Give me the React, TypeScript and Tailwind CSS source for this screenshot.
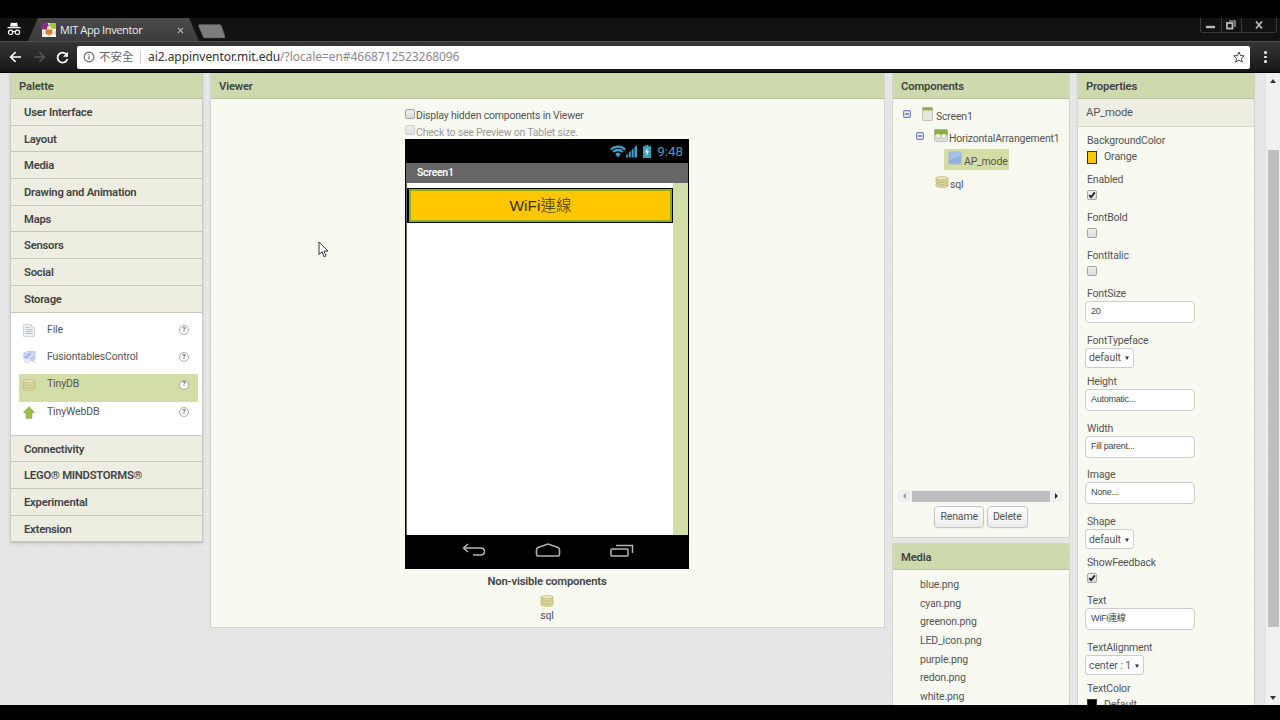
import type { ReactNode } from "react";
import clsx from "clsx";

type IconProps = { className?: string };

const topCategories = [
  "User Interface",
  "Layout",
  "Media",
  "Drawing and Animation",
  "Maps",
  "Sensors",
  "Social",
  "Storage",
];

const bottomCategories = [
  "Connectivity",
  "LEGO® MINDSTORMS®",
  "Experimental",
  "Extension",
];

const mediaFiles = [
  "blue.png",
  "cyan.png",
  "greenon.png",
  "LED_icon.png",
  "purple.png",
  "redon.png",
  "white.png",
];

/* ---------- icons ---------- */

function IncognitoIcon() {
  return (
    <svg width="14" height="14" viewBox="0 0 14 14" fill="none">
      <path d="M4 .6 5.400 1 7 .7 8.600 1 10 .6l1 3.800H3z" fill="#fff" />
      <path d="M.5 5.600h13" stroke="#fff" strokeWidth="1.3" />
      <circle cx="3.6" cy="10.3" r="2.2" stroke="#fff" strokeWidth="1.2" />
      <circle cx="10.4" cy="10.3" r="2.2" stroke="#fff" strokeWidth="1.2" />
      <path d="M5.800 9.800q1.200-.7 2.400 0" stroke="#fff" />
    </svg>
  );
}

function Favicon() {
  return (
    <svg width="14" height="14" viewBox="0 0 14 14">
      <rect width="14" height="14" fill="#fff" />
      <path d="M0 0h5.500l1.500 3-2 3.500H0z" fill="#8e2a80" />
      <path d="M7.500 0H14v6h-4L7 3z" fill="#a3c644" />
      <circle cx="7" cy="5" r="2" fill="#f3e3d2" />
      <rect x="3.5" y="6.5" width="7" height="5" rx="1" fill="#d9793a" />
      <path d="M5 11.500h4l-2 2z" fill="#e8a13a" />
      <path d="M0 8.500 2 7v5H0zM14 8.500 12 7v5h2z" fill="#f0d7b8" />
    </svg>
  );
}

function BackIcon({ className }: IconProps) {
  return (
    <svg
      width="13"
      height="12"
      viewBox="0 0 13 12"
      fill="none"
      stroke="currentColor"
      strokeWidth="1.6"
      className={className}
    >
      <path d="M12 6H1.800M6.600 1.100 1.600 6l5 4.900" />
    </svg>
  );
}

function ReloadIcon() {
  return (
    <svg width="13" height="13" viewBox="0 0 13 13" fill="none">
      <path
        d="M10.600 3.600A5 5 0 1 0 11.400 8"
        stroke="#fff"
        strokeWidth="1.7"
      />
      <path d="M12 .8v5H7z" fill="#fff" />
    </svg>
  );
}

function DatabaseIcon({ className }: IconProps) {
  return (
    <svg width="14" height="12" viewBox="0 0 14 12" className={className}>
      {[7.4, 4.4, 1.4].map((y) => (
        <g key={y} stroke="#b5ab68" strokeWidth=".7" fill="#e9e3a6">
          <path d={`M.9 ${y + 1}v1.200c0 2.400 12.200 2.400 12.200 0V${y + 1}z`} />
          <ellipse cx="7" cy={y + 0.8} rx="6.1" ry="1.5" fill="#f1ecc0" />
        </g>
      ))}
    </svg>
  );
}

function FileIcon() {
  return (
    <svg width="12" height="13" viewBox="0 0 12 13">
      <path d="M.5.5h8l3 2.800v9.200H.5z" fill="#eef1f1" stroke="#d2d8d8" />
      <path d="M8.500.5v3h3" fill="#fff" stroke="#cfd5d5" />
      <path
        d="M2.500 3.500h4M2.500 5.500h7M2.500 7.500h7M2.500 9.500h7"
        stroke="#b4c0c2"
      />
    </svg>
  );
}

function FusionIcon() {
  return (
    <svg width="13" height="14" viewBox="0 0 13 14">
      <path d="M4 1h8.500v8L10 11H3z" fill="#bccbf0" />
      <path d="M.5 2.500h7v6h-7z" fill="#a5b9ec" />
      <path d="M1 9h6v4H1z" fill="#e3e8f2" />
      <path d="M.5 6 6 2M5 9l6-6" stroke="#dfe7fb" strokeWidth="1.2" />
      <path d="M8.500 10 12 12.500" stroke="#c3cbd8" strokeWidth="1.4" />
    </svg>
  );
}

function UpArrowIcon() {
  return (
    <svg width="12" height="13" viewBox="0 0 12 13">
      <path
        d="M6 .7 11.300 6.600H8.800V12.300H3.200V6.600H.7z"
        fill="#9ac23c"
        stroke="#8aa655"
        strokeWidth=".8"
      />
    </svg>
  );
}

function HelpIcon() {
  return (
    <span className="flex size-[8px] items-center justify-center rounded-full bg-white text-[7px] font-bold leading-none text-[#666] outline outline-[#aaa]">
      ?
    </span>
  );
}

function CollapseIcon() {
  return (
    <svg width="8" height="8" viewBox="0 0 8 8" fill="none" className="mb-[4px]">
      <rect
        x=".6"
        y=".6"
        width="6.8"
        height="6.8"
        rx="1.2"
        fill="#eef0fb"
        stroke="#7780c0"
        strokeWidth="1.1"
      />
      <path d="M2 4h4" stroke="#4853a5" strokeWidth="1.2" />
    </svg>
  );
}

function ScreenIcon() {
  return (
    <svg width="11" height="14" viewBox="0 0 11 14">
      <rect x=".5" y=".5" width="10" height="13" rx=".8" fill="#e4e6e2" stroke="#bfc3b8" />
      <path d="M.5.5h10v3H.5z" fill="#95ab4c" />
    </svg>
  );
}

function ArrangementIcon() {
  return (
    <svg width="14" height="13" viewBox="0 0 14 13">
      <rect x=".5" y=".5" width="13" height="12" rx="1" fill="#dcdfd8" stroke="#c2c6bc" />
      <path d="M.5.5h13v5.500H.5z" fill="#8fae3e" />
      <rect x="2.2" y="5" width="4" height="4" rx="1" fill="#fff" stroke="#a9b38a" strokeWidth=".6" />
      <rect x="7.8" y="5" width="4" height="4" rx="1" fill="#fff" stroke="#a9b38a" strokeWidth=".6" />
    </svg>
  );
}

function ButtonIcon() {
  return (
    <svg width="14" height="14" viewBox="0 0 14 14">
      <rect x=".5" y=".5" width="13" height="13" rx="1.2" fill="#a9b4bf" />
      <rect x="2" y="1.2" width="10.8" height="10.6" rx="1" fill="#8fb0e2" />
      <path d="M2 1.200h10.800v3L2 9z" fill="#a3c0ea" />
    </svg>
  );
}

/* ---------- shared pieces ---------- */

function PanelHeader({ title }: { title: string }) {
  return (
    <h2 className="flex h-[26px] shrink-0 items-center border-b border-[#b9c0a6] bg-[#cfd9ae] pt-[3px] pl-2 text-[11.3px] font-semibold tracking-[-0.18px] text-[#444]">
      {title}
    </h2>
  );
}

function Checkbox({ checked, faded }: { checked?: boolean; faded?: boolean }) {
  return (
    <span
      className={clsx(
        "flex size-[10px] shrink-0 items-center justify-center rounded-[2px] border bg-linear-to-b from-[#efefef] to-[#dcdcdc]",
        faded ? "border-[#d0d0d0]" : "border-[#a5a5a5]",
      )}
    >
      {checked && (
        <svg width="8" height="8" viewBox="0 0 8 8" fill="none">
          <path d="m1.200 4.200 1.900 2L6.800 1.400" stroke="#222" strokeWidth="1.8" />
        </svg>
      )}
    </span>
  );
}

function Property({
  label,
  className,
  children,
}: {
  label: string;
  className: string;
  children: ReactNode;
}) {
  return (
    <div className={clsx("shrink-0 pl-[9px]", className)}>
      <div className="h-[15px] text-[10.5px] leading-[16px] tracking-[-0.18px] text-[#555]">
        {label}
      </div>
      {children}
    </div>
  );
}

function ColorValue({ swatch, name }: { swatch: string; name: string }) {
  return (
    <div className="mt-[2px] flex h-[14px] items-center gap-[7px] text-[10.5px] tracking-[-0.1px] text-[#555]">
      <span className={clsx("h-[13px] w-[10px] border border-[#333]", swatch)} />
      {name}
    </div>
  );
}

function TextField({ value }: { value: string }) {
  return (
    <div className="-ml-[2px] h-[22px] w-[110px] rounded-[4px] border border-[#ccc] bg-white pl-[5px] font-['Liberation_Sans','Noto_Sans_CJK_TC',sans-serif] text-[9px] leading-[19px] tracking-[-0.25px] text-[#444]">
      {value}
    </div>
  );
}

function SelectField({ value, width }: { value: string; width: string }) {
  return (
    <div
      className={clsx(
        "-ml-[2px] flex h-[20px] items-center justify-between rounded-[3px] border border-[#ccc] bg-white pt-px pl-[3px] pr-[4px] text-[10.5px] tracking-[-0.1px] text-[#555]",
        width,
      )}
    >
      {value}
      <svg width="4" height="4" viewBox="0 0 4 4">
        <path d="M0 .5h4L2 4z" fill="#333" />
      </svg>
    </div>
  );
}

function CategoryRow({ name }: { name: string }) {
  return (
    <div className="h-[26.7px] border-b border-[#c4c6be] bg-[#edeee1] pl-[13px] text-[11.3px] font-semibold leading-[27px] tracking-[-0.25px] text-[#444]">
      {name}
    </div>
  );
}

function ToolRow({
  icon,
  name,
  selected,
}: {
  icon: ReactNode;
  name: string;
  selected?: boolean;
}) {
  return (
    <div
      className={clsx(
        "mr-[4px] ml-[8px] flex h-[27.4px] items-start pr-[10px] pl-[3px]",
        selected && "bg-[#d2dda8]",
      )}
    >
      <span className="flex h-[21px] w-[14px] items-center justify-center">
        {icon}
      </span>
      <span className="grow pl-[11px] text-[10.5px] leading-[20px] tracking-[-0.15px] text-[#555]">
        {name}
      </span>
      <span className="flex h-[21px] items-center">
        <HelpIcon />
      </span>
    </div>
  );
}

/* ---------- browser chrome ---------- */

function TabStrip() {
  return (
    <div className="flex h-[23px] shrink-0 items-start bg-[#121212]">
      <div className="flex w-[27px] justify-center pt-[4px]">
        <IncognitoIcon />
      </div>
      <div className="ml-px flex h-[23px] w-[171px] items-center bg-linear-to-b from-[#4a4a4a] to-[#3b3b3b] pl-[14px] [clip-path:polygon(10px_0,161px_0,171px_100%,0_100%)]">
        <Favicon />
        <span className="w-[121px] pt-[2px] pl-[4px] font-['Open_Sans','Noto_Sans',sans-serif] text-[11px] tracking-[-0.38px] text-[#eee]">
          MIT App Inventor
        </span>
        <svg width="7" height="7" viewBox="0 0 8 8" className="mt-[2px]">
          <path d="m1 1 6 6M7 1 1 7" stroke="#bbb" strokeWidth="1.2" />
        </svg>
      </div>
      <svg width="28" height="15" viewBox="0 0 28 15" className="mt-[6px] -ml-[2px]">
        <path
          d="M2.500.5h20q1.500 0 2 1.500l3.500 10.500q.3 1.500-1 1.500H8q-1.500 0-2-1.500L1.500 2q-.3-1.500 1-1.500z"
          fill="#7d7d7d"
          stroke="#555"
          strokeWidth=".6"
        />
      </svg>
      <div className="ml-auto mr-[3px] flex h-[15px] items-center rounded-b-[3px] border-x border-b border-[#3a3a3a]">
        <span className="flex h-full w-[20px] items-center justify-center">
          <svg width="9" height="4" viewBox="0 0 9 4" className="mt-[3px] mr-px">
            <path d="M0 2h9" stroke="#bbb" strokeWidth="2.4" />
          </svg>
        </span>
        <span className="flex h-full w-[21px] items-center justify-center border-x border-[#3a3a3a]">
          <svg width="10" height="10" viewBox="0 0 10 10" fill="none" stroke="#bbb" className="mr-px">
            <path d="M3 1h6v6" strokeWidth="1.2" />
            <rect x="1" y="3" width="5.5" height="5.5" strokeWidth="1.8" />
          </svg>
        </span>
        <span className="flex h-full w-[34px] items-center justify-center">
          <svg width="8" height="8" viewBox="0 0 8 8">
            <path d="m1 .5 6 7M7 .5l-6 7" stroke="#bbb" strokeWidth="1.7" />
          </svg>
        </span>
      </div>
    </div>
  );
}

function Toolbar() {
  return (
    <div className="flex h-[32px] shrink-0 items-center border-t border-b border-t-[#4d4d4d] border-b-black bg-linear-to-b from-[#363636] to-[#171717]">
      <BackIcon className="ml-[9px] text-white" />
      <BackIcon className="ml-[11px] rotate-180 text-[#555]" />
      <span className="ml-[10px]">
        <ReloadIcon />
      </span>
      <div className="ml-[8px] flex h-[23px] w-[1173px] items-center rounded-[2px] bg-white pl-[6px] pr-[5px] font-['Noto_Sans','Noto_Sans_CJK_TC',sans-serif] text-[12px] text-[#666]">
        <svg width="12" height="12" viewBox="0 0 12 12" fill="none">
          <circle cx="6" cy="6" r="4.9" stroke="#666" strokeWidth="1.1" />
          <path d="M6 5.200v3.300M6 3.200v1.200" stroke="#666" strokeWidth="1.2" />
        </svg>
        <span className="ml-[4px] w-[36px] text-[11.5px]">不安全</span>
        <span className="ml-[5px] h-[13px] w-px bg-[#ccc]" />
        <span className="ml-[7px] tracking-[-0.06px] text-[#8a8a8a]">
          <span className="text-[#333]">ai2.appinventor.mit.edu</span>
          /?locale=en#4668712523268096
        </span>
        <svg width="12" height="12" viewBox="0 0 24 24" className="ml-auto" fill="none">
          <path
            d="m12 2 3 7 7.600.7-5.800 5 1.800 7.500L12 18.200l-6.600 4 1.800-7.500-5.800-5L9 9z"
            stroke="#444"
            strokeWidth="2"
          />
        </svg>
      </div>
      <span className="ml-[14px] flex flex-col gap-[2px]">
        <i className="size-[2.5px] rounded-full bg-white" />
        <i className="size-[2.5px] rounded-full bg-white" />
        <i className="size-[2.5px] rounded-full bg-white" />
      </span>
    </div>
  );
}

/* ---------- panels ---------- */

function Palette() {
  return (
    <aside className="ml-[10px] w-[193px] self-start border-x border-b border-[#c9c9c5] shadow-sm">
      <PanelHeader title="Palette" />
      {topCategories.map((name) => (
        <CategoryRow key={name} name={name} />
      ))}
      <div className="h-[123px] border-b border-[#c9c9c5] bg-white pt-[7px]">
        <ToolRow icon={<FileIcon />} name="File" />
        <ToolRow icon={<FusionIcon />} name="FusiontablesControl" />
        <ToolRow
          icon={<DatabaseIcon className="opacity-80" />}
          name="TinyDB"
          selected
        />
        <ToolRow icon={<UpArrowIcon />} name="TinyWebDB" />
      </div>
      {bottomCategories.map((name) => (
        <CategoryRow key={name} name={name} />
      ))}
    </aside>
  );
}

function PhonePreview() {
  return (
    <div className="ml-[194px] flex h-[430px] w-[284px] flex-col border border-black bg-black">
      <div className="flex h-[23px] items-center justify-end pr-[5px] pb-px text-[#3f9fc0]">
        <svg width="16" height="13" viewBox="0 0 16 13" fill="none" stroke="currentColor">
          <path d="M.8 4.600a10 10 0 0 1 14.400 0" strokeWidth="2.3" />
          <path d="M3.200 7a6.800 6.800 0 0 1 9.600 0" strokeWidth="2.3" />
          <path d="m8 12.500-2.700-3.300a3.800 3.800 0 0 1 5.400 0z" fill="currentColor" stroke="none" />
        </svg>
        <svg width="12" height="13" viewBox="0 0 12 13" fill="currentColor">
          <path d="M0 12.500v-2l2-2v4zM2.800 12.500V7.700l2-2v6.800zM5.600 12.500V5l2-2v9.500zM8.400 12.500V2.500l2.600-2.500v12.500z" />
        </svg>
        <svg width="8" height="13" viewBox="0 0 8 13" className="ml-[5px]">
          <path d="M2.500 0h3v1.200H8V13H0V1.200h2.500z" fill="currentColor" />
          <path d="M4.600 3 2 7.300h1.700L3.200 11 6 6.300H4.200z" fill="#fff" />
        </svg>
        <span className="ml-[6px] text-[13.5px] tracking-[-0.1px]">9:48</span>
      </div>
      <div className="flex h-[20px] items-center bg-[#666] pl-[11px] text-[10.5px] font-semibold tracking-[-0.3px] text-white">
        Screen1
      </div>
      <div className="flex h-[352px] border-l border-[#666] bg-white">
        <div className="w-[266px] shrink-0 pt-[5px]">
          <div className="h-[35px] border border-l-2 border-black bg-[#ffc700]">
            <div className="flex h-full items-center justify-center border-2 border-[#93ac1c] font-['Liberation_Sans','Noto_Sans_CJK_TC',sans-serif] text-[15.5px] text-[#3a3000]">
              WiFi<span className="font-light">連線</span>
            </div>
          </div>
        </div>
        <div className="grow bg-[#d2dda8]" />
      </div>
      <div className="flex grow items-center justify-center gap-[49px] pb-[3px] pl-px">
        <svg width="24" height="14" viewBox="0 0 24 14" fill="none" stroke="#b4b4b4" strokeWidth="1.5">
          <path d="M6 1 1.500 5 6 9M2 5h16.500q4 0 4 3.500T18.500 12H11" />
        </svg>
        <svg width="26" height="14" viewBox="0 0 26 14" fill="none" stroke="#b4b4b4" strokeWidth="1.5">
          <path d="M1.500 6.500Q1.500 5 3 4.500L13 1l10 3.500q1.500.5 1.500 2v5q0 1.500-1.500 1.500H3q-1.500 0-1.500-1.500z" />
        </svg>
        <svg width="24" height="13" viewBox="0 0 24 13" fill="none" stroke="#b4b4b4" strokeWidth="1.5">
          <path d="M6 1.500h16.500V9" />
          <rect x="1" y="5" width="17" height="7" rx=".8" />
        </svg>
      </div>
    </div>
  );
}

function Viewer() {
  return (
    <main className="ml-[7px] h-[555px] w-[675px] shrink-0 border-x border-b border-[#d3d3cf] bg-[#f8f9f1]">
      <PanelHeader title="Viewer" />
      <div className="h-[40px] pt-[7px] pl-[194px] text-[10.5px] leading-[17px] tracking-[-0.2px]">
        <label className="flex h-[17px] items-start gap-px text-[#555]">
          <span className="pt-[3px]">
            <Checkbox />
          </span>
          <span className="pt-px">Display hidden components in Viewer</span>
        </label>
        <label className="flex h-[16px] items-start gap-px text-[#999]">
          <span className="pt-[2px]">
            <Checkbox faded />
          </span>
          <span className="pt-px">Check to see Preview on Tablet size.</span>
        </label>
      </div>
      <PhonePreview />
      <div className="ml-[194px] flex w-[284px] flex-col items-center">
        <span className="mt-[5px] text-[11.3px] font-semibold leading-[16px] tracking-[-0.2px] text-[#444]">
          Non-visible components
        </span>
        <DatabaseIcon className="mt-[5px]" />
        <span className="mt-px text-[10.5px] leading-[15px] tracking-[-0.15px] text-[#555]">
          sql
        </span>
      </div>
    </main>
  );
}

function ComponentsPanel() {
  return (
    <section className="flex h-[465px] shrink-0 flex-col border-x border-b border-[#d3d3cf] bg-[#f8f9f1]">
      <PanelHeader title="Components" />
      <div className="h-[391px] shrink-0 pt-[6px] text-[10.5px] tracking-[-0.2px] text-[#555]">
        <div className="flex h-[22px] items-center pl-[10px]">
          <CollapseIcon />
          <span className="ml-[11px] pb-[5px]">
            <ScreenIcon />
          </span>
          <span className="ml-[3px] pt-[2px]">Screen1</span>
        </div>
        <div className="flex h-[22px] items-center pl-[23px]">
          <CollapseIcon />
          <span className="ml-[10px] pb-[5px]">
            <ArrangementIcon />
          </span>
          <span className="ml-px pt-[2px] whitespace-nowrap">
            HorizontalArrangement1
          </span>
        </div>
        <div className="ml-[51px] flex h-[21px] w-[65px] items-center bg-[#d2dda8] pl-[4px]">
          <span className="pb-[3px]">
            <ButtonIcon />
          </span>
          <span className="ml-[2px] pt-[5px]">AP_mode</span>
        </div>
        <div className="flex h-[24px] items-center pl-[42px]">
          <DatabaseIcon className="mb-[1px]" />
          <span className="ml-px pt-[5px]">sql</span>
        </div>
      </div>
      <div className="mr-[6px] ml-[5px] flex h-[12px] shrink-0 items-center justify-between bg-[#f0f0f0] px-[4px]">
        <svg width="5" height="6" viewBox="0 0 5 6">
          <path d="M4 0v6L1 3z" fill="#999" />
        </svg>
        <div className="h-[11px] w-[138px] bg-[#bfbfbf]" />
        <svg width="5" height="6" viewBox="0 0 5 6">
          <path d="M1 0v6l3-3z" fill="#222" />
        </svg>
      </div>
      <div className="mt-[4px] flex justify-center gap-[3px] text-[10.5px] tracking-[-0.15px] text-[#555]">
        {["Rename", "Delete"].map((label) => (
          <button
            key={label}
            className="h-[22px] rounded-[4px] border border-[#c4c4c4] bg-linear-to-b from-white to-[#ececec] px-[5px] leading-[20px] shadow-xs"
          >
            {label}
          </button>
        ))}
      </div>
    </section>
  );
}

function MediaPanel() {
  return (
    <section className="mt-[5px] h-[163px] shrink-0 overflow-hidden border-x border-t border-[#d3d3cf] bg-[#f8f9f1]">
      <PanelHeader title="Media" />
      <ul className="pt-[5px] pl-[27px] text-[10.5px] tracking-[-0.16px] text-[#555]">
        {mediaFiles.map((file) => (
          <li key={file} className="h-[18.7px] leading-[19px]">
            {file}
          </li>
        ))}
      </ul>
    </section>
  );
}

function PropertiesPanel() {
  return (
    <section className="ml-[7px] flex w-[178px] flex-col overflow-hidden border-x border-[#d3d3cf] bg-[#f8f9f1]">
      <PanelHeader title="Properties" />
      <div className="h-[28px] shrink-0 border-b border-[#d6d8c8] bg-[#edeee1] pl-[8px] text-[11.3px] leading-[27px] tracking-[-0.2px] text-[#555]">
        AP_mode
      </div>
      <div className="flex flex-col pt-[6px]">
        <Property label="BackgroundColor" className="h-[39px]">
          <ColorValue swatch="bg-[#ffc700]" name="Orange" />
        </Property>
        <Property label="Enabled" className="h-[38px]">
          <div className="pt-[3px]">
            <Checkbox checked />
          </div>
        </Property>
        <Property label="FontBold" className="h-[38px]">
          <div className="pt-[3px]">
            <Checkbox />
          </div>
        </Property>
        <Property label="FontItalic" className="h-[38px]">
          <div className="pt-[3px]">
            <Checkbox />
          </div>
        </Property>
        <Property label="FontSize" className="h-[46.7px]">
          <TextField value="20" />
        </Property>
        <Property label="FontTypeface" className="h-[41.3px]">
          <SelectField value="default" width="w-[49px]" />
        </Property>
        <Property label="Height" className="h-[46.7px]">
          <TextField value="Automatic..." />
        </Property>
        <Property label="Width" className="h-[46.7px]">
          <TextField value="Fill parent..." />
        </Property>
        <Property label="Image" className="h-[46.7px]">
          <TextField value="None..." />
        </Property>
        <Property label="Shape" className="h-[41.3px]">
          <SelectField value="default" width="w-[49px]" />
        </Property>
        <Property label="ShowFeedback" className="h-[38px]">
          <div className="pt-[3px]">
            <Checkbox checked />
          </div>
        </Property>
        <Property label="Text" className="h-[46.7px]">
          <TextField value="WiFi連線" />
        </Property>
        <Property label="TextAlignment" className="h-[41.3px]">
          <SelectField value="center : 1" width="w-[59px]" />
        </Property>
        <Property label="TextColor" className="h-[41.3px]">
          <ColorValue swatch="bg-black" name="Default" />
        </Property>
      </div>
    </section>
  );
}

function PageScrollbar() {
  return (
    <div className="ml-auto flex w-[14px] flex-col items-center bg-[#f0f0f0]">
      <svg width="6" height="4" viewBox="0 0 6 4" className="mt-[6px]">
        <path d="M0 4h6L3 0z" fill="#333" />
      </svg>
      <div className="mt-[67px] h-[477px] w-[11px] bg-[#bfbfbf]" />
      <svg width="6" height="4" viewBox="0 0 6 4" className="mt-auto mb-[5px]">
        <path d="M0 0h6L3 4z" fill="#333" />
      </svg>
    </div>
  );
}

export default function App() {
  return (
    <div className="relative flex h-[720px] w-[1280px] flex-col overflow-hidden bg-black pt-[18px] font-[Roboto,'Noto_Sans_CJK_TC',sans-serif]">
      <TabStrip />
      <Toolbar />
      <div className="flex h-[632px] shrink-0 overflow-hidden bg-[#e5e5e5] bg-[repeating-linear-gradient(0deg,#00000004_0_1px,transparent_1px_3px),repeating-linear-gradient(90deg,#ffffff33_0_1px,transparent_1px_3px)]">
        <Palette />
        <Viewer />
        <div className="ml-[7px] flex w-[178px] flex-col">
          <ComponentsPanel />
          <MediaPanel />
        </div>
        <PropertiesPanel />
        <PageScrollbar />
      </div>

      {/* mouse pointer */}
      <svg
        width="11"
        height="17"
        viewBox="0 0 11 17"
        className="absolute top-[241px] left-[318px]"
      >
        <path
          d="M1 1v12.500l3-2.800 2 5 2-.9-2-4.700h4z"
          fill="#fff"
          stroke="#222"
          strokeWidth=".9"
        />
      </svg>
    </div>
  );
}
